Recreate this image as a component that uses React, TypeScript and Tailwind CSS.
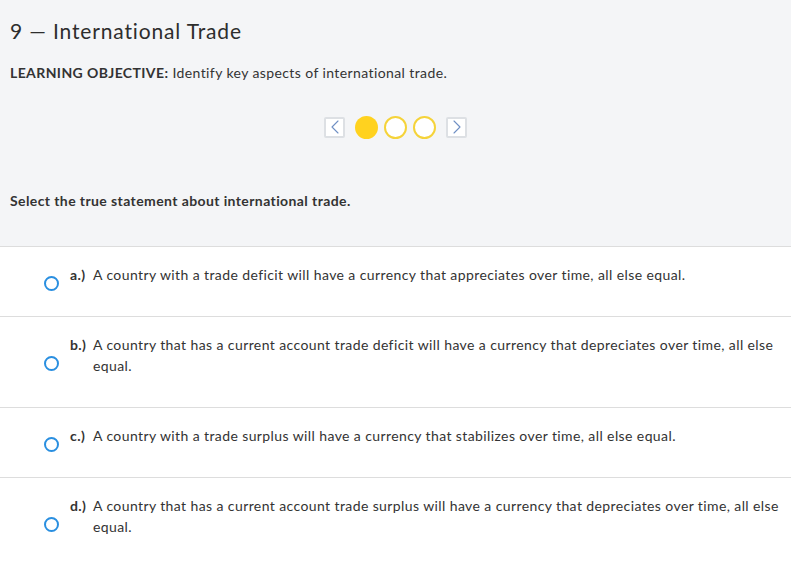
import React from 'react';

const options = [
  { key: 'a', text: 'A country with a trade deficit will have a currency that appreciates over time, all else equal.' },
  { key: 'b', text: 'A country that has a current account trade deficit will have a currency that depreciates over time, all else equal.' },
  { key: 'c', text: 'A country with a trade surplus will have a currency that stabilizes over time, all else equal.' },
  { key: 'd', text: 'A country that has a current account trade surplus will have a currency that depreciates over time, all else equal.' },
];

const Chevron: React.FC<{ dir: 'left' | 'right' }> = ({ dir }) => (
  <svg width="8" height="14" viewBox="0 0 8 14" fill="none">
    <path
      d={dir === 'left' ? 'M7 1 L1 7 L7 13' : 'M1 1 L7 7 L1 13'}
      stroke="#6f8fc4"
      strokeWidth="1.1"
      strokeLinecap="round"
      strokeLinejoin="round"
    />
  </svg>
);

const App: React.FC = () => {
  return (
    <div className="w-[791px] h-[568px] bg-white overflow-hidden text-[#333333] font-['Lato',sans-serif] tracking-[0.4px]">
      <div className="bg-[#f4f5f7] px-[10px] pt-[18px] pb-[35px] border-b border-[#dddddd]">
        <h1 className="text-[21px] leading-[26px] tracking-[0.85px] text-[#2d2d2d]">9 — International Trade</h1>
        <p className="mt-[19px] text-[14px] leading-[20px]">
          <span className="font-bold">LEARNING OBJECTIVE:</span> Identify key aspects of international trade.
        </p>
        <div className="mt-[33px] flex items-center justify-center h-[22px]">
          <button className="w-[21px] h-[21px] flex items-center justify-center bg-white border-2 border-[#dde0e4] rounded-[2px]">
            <Chevron dir="left" />
          </button>
          <span className="ml-[10px] w-[23px] h-[23px] rounded-full bg-[#ffd21f]" />
          <span className="ml-[6px] w-[23px] h-[23px] rounded-full bg-white border-2 border-[#f5d33a]" />
          <span className="ml-[6px] w-[23px] h-[23px] rounded-full bg-white border-2 border-[#f5d33a]" />
          <button className="ml-[10px] w-[21px] h-[21px] flex items-center justify-center bg-white border-2 border-[#dde0e4] rounded-[2px]">
            <Chevron dir="right" />
          </button>
        </div>
        <p className="mt-[53px] text-[14px] leading-[20px] font-bold">Select the true statement about international trade.</p>
      </div>
      <div>
        {options.map((o) => (
          <div key={o.key} className="flex items-center pl-[44px] pr-[10px] border-b border-[#dddddd] last:border-b-0">
            <span className="w-[15px] h-[15px] shrink-0 rounded-full border-2 border-[#2a8fe0] mt-[3px]" />
            <div className="flex pt-[17px] pb-[31px] ml-[11px] text-[14px] leading-[21px]">
              <span className="font-bold w-[23px] shrink-0">{o.key}.)</span>
              <span>{o.text}</span>
            </div>
          </div>
        ))}
      </div>
    </div>
  );
};

export default App;
